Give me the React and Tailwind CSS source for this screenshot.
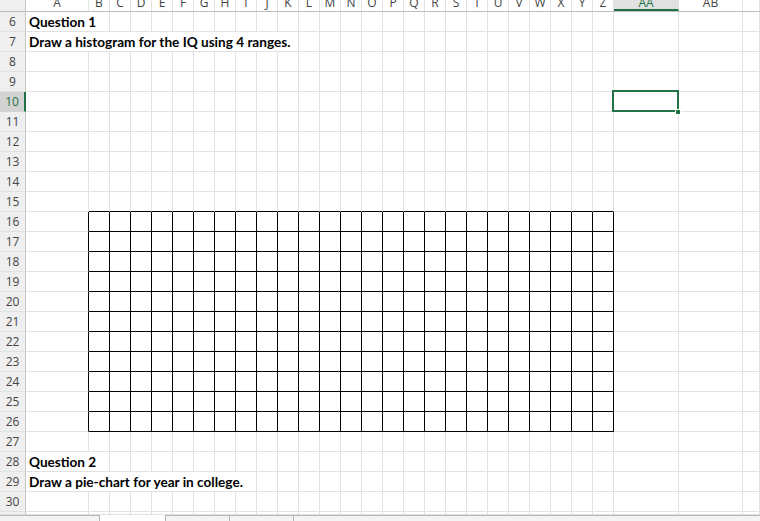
import React from 'react';

const COLS = ['A', ...'BCDEFGHIJKLMNOPQRSTUVWXYZ'.split(''), 'AA', 'AB', 'AC'];

const widthOf = (c) => {
  if (c === 'A') return 'w-[63px]';
  if (c === 'AA') return 'w-[65px]';
  if (c === 'AB') return 'w-[64px]';
  if (c === 'AC') return 'flex-1';
  return 'w-[21px]';
};

// text rows: which column the spilled text runs to, and its pixel width
const TEXT = {
  6: { text: 'Question 1', span: 2, w: 'w-[84px]' },
  7: { text: 'Draw a histogram for the IQ using 4 ranges.', span: 11, w: 'w-[273px]' },
  28: { text: 'Question 2', span: 2, w: 'w-[84px]' },
  29: { text: 'Draw a pie-chart for year in college.', span: 9, w: 'w-[231px]' },
};

const ROWS = Array.from({ length: 26 }, (_, i) => i + 6); // 6..31

const inBox = (r, ci) => r >= 16 && r <= 26 && ci >= 1 && ci <= 25;

const Cell = ({ r, ci, c }) => {
  const black = inBox(r, ci);
  const rightBlack = black || (ci === 0 && r >= 16 && r <= 26);
  const bottomBlack = black || (r === 15 && ci >= 1 && ci <= 25);
  const selected = r === 10 && c === 'AA';
  return (
    <div
      className={`${widthOf(c)} h-full shrink-0 border-r border-b relative ${
        rightBlack ? 'border-r-black' : 'border-r-[#e1e1e1]'
      } ${bottomBlack ? 'border-b-black' : 'border-b-[#e1e1e1]'}`}
    >
      {selected && (
        <>
          <div className="absolute -left-[2px] -top-[2px] w-[67px] h-[22px] border-2 border-[#217346] z-10" />
          <div className="absolute left-[61px] top-[17px] w-[6px] h-[6px] bg-[#217346] border border-white z-20" />
        </>
      )}
    </div>
  );
};

const Row = ({ r }) => {
  const t = TEXT[r];
  const active = r === 10;
  const cols = COLS.map((c, ci) => ({ c, ci }));
  const rest = t ? cols.slice(t.span) : cols;
  return (
    <div className={`flex shrink-0 ${r === 31 ? 'h-[3px]' : 'h-[20px]'}`}>
      <div
        className={`w-[26px] shrink-0 h-full flex items-center justify-center text-[12px] border-b ${
          active
            ? 'bg-[#d2d2d2] text-[#217346] border-r-2 border-r-[#217346] border-b-[#d2d2d2]'
            : 'bg-[#efefef] text-[#444] border-r border-r-[#c6c6c6] border-b-[#e1e1e1]'
        }`}
        style={{ fontFamily: '"Open Sans", sans-serif' }}
      >
        {r !== 31 && r}
      </div>
      {t && (
        <div
          className={`${t.w} shrink-0 h-full border-r border-b border-[#e1e1e1] flex items-end pl-[3px] whitespace-nowrap text-[13.6px] font-bold text-black leading-[18px]`}
          style={{ fontFamily: 'Lato, sans-serif' }}
        >
          {t.text}
        </div>
      )}
      {rest.map(({ c, ci }) => (
        <Cell key={c} r={r} ci={ci} c={c} />
      ))}
    </div>
  );
};

const Header = () => (
  <div className="flex h-[12px] shrink-0 border-b border-[#bdbdbd] bg-white overflow-hidden">
    <div className="w-[26px] shrink-0 bg-[#efefef] border-r border-[#c6c6c6]" />
    {COLS.map((c) => (
      <div
        key={c}
        className={`${widthOf(c)} shrink-0 h-full overflow-hidden flex justify-center border-r border-[#e1e1e1] text-[12px] ${
          c === 'AA' ? 'bg-[#e1e1e1] text-[#217346] border-b-2 border-b-[#217346]' : 'text-[#444]'
        }`}
        style={{ fontFamily: '"Open Sans", sans-serif' }}
      >
        <span className="block leading-[16px] -mt-[5px]">{c !== 'AC' && c}</span>
      </div>
    ))}
  </div>
);

const BottomBar = () => (
  <div className="flex flex-1 bg-[#f3f3f3]">
    <div className="w-[100px] border-t border-r border-[#b5b5b5]" />
    <div className="w-[65px] bg-white" />
    <div className="w-[65px] border-t border-l border-r border-[#b5b5b5]" />
    <div className="w-[64px] border-t border-r border-[#b5b5b5]" />
    <div className="flex-1 border-t border-[#b5b5b5]" />
  </div>
);

export default function App() {
  return (
    <div className="w-[760px] h-[521px] overflow-hidden bg-white flex flex-col select-none">
      <Header />
      {ROWS.map((r) => (
        <Row key={r} r={r} />
      ))}
      <BottomBar />
    </div>
  );
}
